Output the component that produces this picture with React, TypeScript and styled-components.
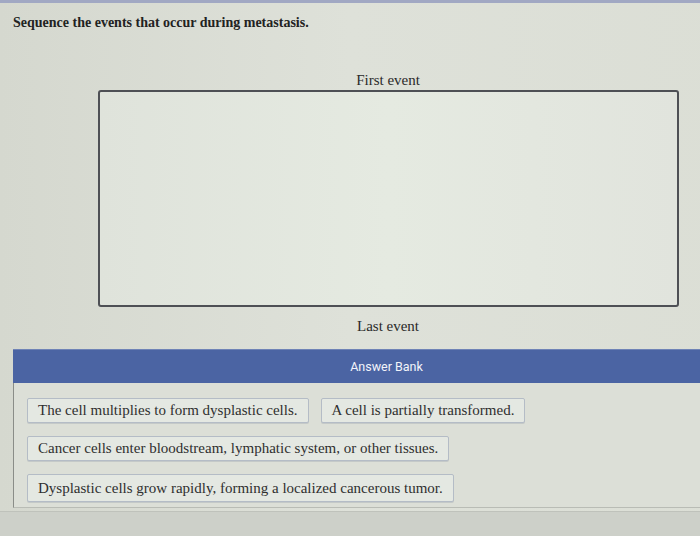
import React from "react";
import styled, { createGlobalStyle } from "styled-components";

const Global = createGlobalStyle`
  html, body {
    margin: 0;
    padding: 0;
    width: 700px;
    height: 536px;
    overflow: hidden;
    background: #c9ccc5;
  }
  * { box-sizing: border-box; }
`;

const Screen = styled.div`
  width: 776px;
  height: 536px;
  display: flex;
  flex-direction: column;
  background: linear-gradient(90deg, #d5d8cf 0%, #dee1d9 45%, #dbded5 100%);
  border-top: 3px solid #a1a8c3;
  font-family: "Liberation Serif", "Times New Roman", serif;
  color: #262626;
`;

const Prompt = styled.h1`
  margin: 0;
  padding: 11px 0 0 13px;
  font-size: 14px;
  line-height: 18px;
  font-weight: 700;
  color: #222;
`;

const Sequence = styled.section`
  display: flex;
  flex-direction: column;
  align-items: center;
  width: 580px;
  margin: 39px 0 0 98px;
`;

const EndLabel = styled.div`
  font-size: 15px;
  line-height: 18px;
  color: #2a2a2a;
`;

const DropZone = styled.div`
  width: 581px;
  height: 217px;
  margin: 1px 0 10px;
  border: 2px solid #4e5055;
  border-radius: 3px;
  background: linear-gradient(90deg, #dfe3db 0%, #e5eae1 50%, #e1e4dd 100%);
`;

const Bank = styled.section`
  margin: 14px 0 0 13px;
  width: 763px;
  display: flex;
  flex-direction: column;
`;

const BankHeader = styled.div`
  height: 34px;
  display: flex;
  align-items: center;
  justify-content: center;
  padding-right: 16px;
  background: #4b64a3;
  border-top: 1px solid #6f83b6;
  font-family: Roboto, "Liberation Sans", sans-serif;
  font-size: 12.5px;
  color: #f2f4fa;
`;

const BankBody = styled.div`
  border-left: 1px solid #8a8d88;
  border-bottom: 1px solid #b9bcb5;
  padding: 15px 0 5px 13px;
  display: flex;
  flex-direction: column;
  gap: 13px;
  background: #dcdfd7;
`;

const ChipRow = styled.div`
  display: flex;
  gap: 12px;
`;

const Chip = styled.div<{ $tall?: boolean }>`
  height: ${(p) => (p.$tall ? 28 : 25)}px;
  display: flex;
  align-items: center;
  padding: 0 10px;
  background: #e4e8e2;
  border: 1px solid #b4bcc6;
  border-radius: 2px;
  box-shadow: 0 1px 0 #c4c9c8;
  font-size: 15px;
  color: #2f2f2f;
  white-space: nowrap;
`;

const Footer = styled.div`
  flex: 1;
  margin-top: 3px;
  border-top: 1px solid #bfc2bb;
  background: #cdd0c9;
`;

export default function App() {
  return (
    <>
      <Global />
      <Screen>
        <Prompt>Sequence the events that occur during metastasis.</Prompt>
        <Sequence>
          <EndLabel>First event</EndLabel>
          <DropZone />
          <EndLabel>Last event</EndLabel>
        </Sequence>
        <Bank>
          <BankHeader>Answer Bank</BankHeader>
          <BankBody>
            <ChipRow>
              <Chip>The cell multiplies to form dysplastic cells.</Chip>
              <Chip>A cell is partially transformed.</Chip>
            </ChipRow>
            <ChipRow>
              <Chip>Cancer cells enter bloodstream, lymphatic system, or other tissues.</Chip>
            </ChipRow>
            <ChipRow>
              <Chip $tall>Dysplastic cells grow rapidly, forming a localized cancerous tumor.</Chip>
            </ChipRow>
          </BankBody>
        </Bank>
        <Footer />
      </Screen>
    </>
  );
}
